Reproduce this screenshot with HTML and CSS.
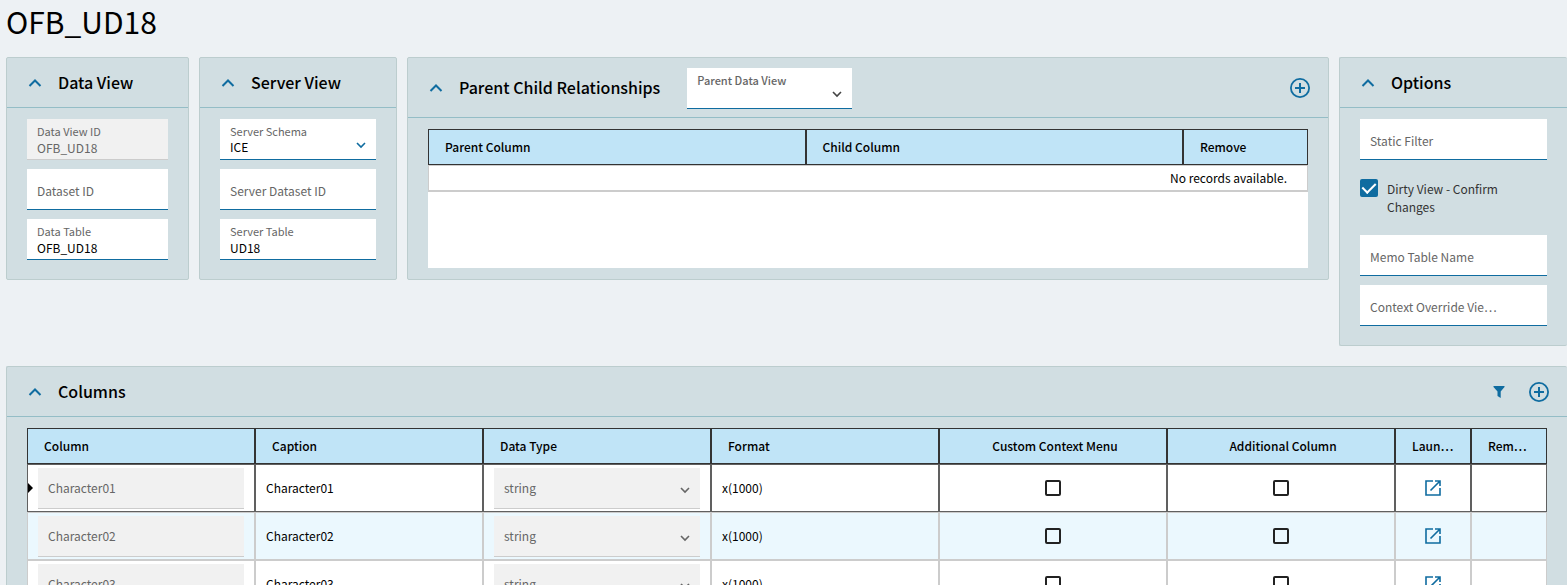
FILE: index.html
```html
<!DOCTYPE html>
<html lang="en">
<head>
    <meta charset="UTF-8">
    <meta name="viewport" content="width=device-width, initial-scale=1.0">
    <title>OFB_UD18</title>
    <link rel="stylesheet" href="styles.css">
</head>
<body>
    <!-- Shared icons -->
    <svg class="sprite" aria-hidden="true">
        <symbol id="chevron-up" viewBox="0 0 16 16"><path d="M2.500 11 8 5.500 13.500 11" fill="none" stroke="currentColor" stroke-width="2"/></symbol>
        <symbol id="chevron-down" viewBox="0 0 16 16"><path d="M4 6 8 10 12 6" fill="none" stroke="currentColor" stroke-width="1.6"/></symbol>
        <symbol id="plus" viewBox="0 0 20 20"><circle cx="10" cy="10" r="9.1" fill="none" stroke="currentColor" stroke-width="1.8"/><path d="M10 5v10M5 10h10" stroke="currentColor" stroke-width="2"/></symbol>
        <symbol id="filter" viewBox="0 0 12 12"><path d="M.5 0h11v1L7.7 5.5V12L4.5 10V5.500L.5 1z" fill="currentColor"/></symbol>
        <symbol id="launch" viewBox="0 0 16 16"><path d="M8 1H1v14h14V8M10 1h5v5M15 1 5.500 10.500" fill="none" stroke="currentColor" stroke-width="1.6"/></symbol>
    </svg>

    <main class="page">
        <h1>OFB_UD18</h1>

        <div class="panels">
            <section class="panel">
                <header class="panel-header">
                    <button class="icon-button toggle" aria-label="Collapse Data View"><svg><use href="#chevron-up"/></svg></button>
                    <h2>Data View</h2>
                </header>
                <div class="panel-body">
                    <div class="field disabled">
                        <label for="viewId">Data View ID</label>
                        <input type="text" id="viewId" value="OFB_UD18" disabled>
                    </div>
                    <div class="field empty">
                        <input type="text" placeholder="Dataset ID" aria-label="Dataset ID">
                    </div>
                    <div class="field">
                        <label for="dataTable">Data Table</label>
                        <input type="text" id="dataTable" value="OFB_UD18">
                    </div>
                </div>
            </section>

            <section class="panel">
                <header class="panel-header">
                    <button class="icon-button toggle" aria-label="Collapse Server View"><svg><use href="#chevron-up"/></svg></button>
                    <h2>Server View</h2>
                </header>
                <div class="panel-body">
                    <div class="field drop blue">
                        <label for="schema">Server Schema</label>
                        <select id="schema"><option>ICE</option></select>
                        <svg class="arrow"><use href="#chevron-down"/></svg>
                    </div>
                    <div class="field empty">
                        <input type="text" placeholder="Server Dataset ID" aria-label="Server Dataset ID">
                    </div>
                    <div class="field">
                        <label for="serverTable">Server Table</label>
                        <input type="text" id="serverTable" value="UD18">
                    </div>
                </div>
            </section>

            <section class="panel">
                <header class="panel-header tall">
                    <button class="icon-button toggle" aria-label="Collapse Parent Child Relationships"><svg><use href="#chevron-up"/></svg></button>
                    <h2>Parent Child Relationships</h2>
                    <div class="field drop parent-view">
                        <label for="parentView">Parent Data View</label>
                        <select id="parentView"><option></option></select>
                        <svg class="arrow"><use href="#chevron-down"/></svg>
                    </div>
                    <div class="actions">
                        <button class="icon-button add" aria-label="Add relationship"><svg><use href="#plus"/></svg></button>
                    </div>
                </header>
                <div class="panel-body">
                    <div class="relations">
                        <table class="grid">
                            <colgroup><col><col><col class="remove"></colgroup>
                            <thead>
                                <tr><th>Parent Column</th><th>Child Column</th><th>Remove</th></tr>
                            </thead>
                            <tbody>
                                <tr class="no-records"><td colspan="3">No records available.</td></tr>
                            </tbody>
                        </table>
                    </div>
                </div>
            </section>

            <section class="panel">
                <header class="panel-header">
                    <button class="icon-button toggle" aria-label="Collapse Options"><svg><use href="#chevron-up"/></svg></button>
                    <h2>Options</h2>
                </header>
                <div class="panel-body">
                    <div class="field empty">
                        <input type="text" placeholder="Static Filter" aria-label="Static Filter">
                    </div>
                    <div class="option">
                        <input type="checkbox" id="dirtyView" checked>
                        <label for="dirtyView">Dirty View - Confirm Changes</label>
                    </div>
                    <div class="field empty">
                        <input type="text" placeholder="Memo Table Name" aria-label="Memo Table Name">
                    </div>
                    <div class="field empty">
                        <input type="text" placeholder="Context Override Vie…" aria-label="Context Override View">
                    </div>
                </div>
            </section>
        </div>

        <section class="panel">
            <header class="panel-header">
                <button class="icon-button toggle" aria-label="Collapse Columns"><svg><use href="#chevron-up"/></svg></button>
                <h2>Columns</h2>
                <div class="actions">
                    <button class="icon-button filter" aria-label="Filter"><svg><use href="#filter"/></svg></button>
                    <button class="icon-button add" aria-label="Add column"><svg><use href="#plus"/></svg></button>
                </div>
            </header>
            <div class="panel-body">
                <table class="grid columns">
                    <colgroup><col span="6"><col class="narrow" span="2"></colgroup>
                    <thead>
                        <tr>
                            <th>Column</th>
                            <th>Caption</th>
                            <th>Data Type</th>
                            <th>Format</th>
                            <th class="center">Custom Context Menu</th>
                            <th class="center">Additional Column</th>
                            <th>Laun…</th>
                            <th>Rem…</th>
                        </tr>
                    </thead>
                    <tbody>
                        <tr class="current">
                            <td><div class="field disabled empty"><input type="text" value="Character01" aria-label="Column" disabled></div></td>
                            <td>Character01</td>
                            <td><div class="field disabled empty drop"><select aria-label="Data Type" disabled><option>string</option></select><svg class="arrow"><use href="#chevron-down"/></svg></div></td>
                            <td>x(1000)</td>
                            <td class="center"><input type="checkbox" aria-label="Custom Context Menu"></td>
                            <td class="center"><input type="checkbox" aria-label="Additional Column"></td>
                            <td class="center"><button class="icon-button launch" aria-label="Launch"><svg><use href="#launch"/></svg></button></td>
                            <td></td>
                        </tr>
                        <tr>
                            <td><div class="field disabled empty"><input type="text" value="Character02" aria-label="Column" disabled></div></td>
                            <td>Character02</td>
                            <td><div class="field disabled empty drop"><select aria-label="Data Type" disabled><option>string</option></select><svg class="arrow"><use href="#chevron-down"/></svg></div></td>
                            <td>x(1000)</td>
                            <td class="center"><input type="checkbox" aria-label="Custom Context Menu"></td>
                            <td class="center"><input type="checkbox" aria-label="Additional Column"></td>
                            <td class="center"><button class="icon-button launch" aria-label="Launch"><svg><use href="#launch"/></svg></button></td>
                            <td></td>
                        </tr>
                        <tr>
                            <td><div class="field disabled empty"><input type="text" value="Character03" aria-label="Column" disabled></div></td>
                            <td>Character03</td>
                            <td><div class="field disabled empty drop"><select aria-label="Data Type" disabled><option>string</option></select><svg class="arrow"><use href="#chevron-down"/></svg></div></td>
                            <td>x(1000)</td>
                            <td class="center"><input type="checkbox" aria-label="Custom Context Menu"></td>
                            <td class="center"><input type="checkbox" aria-label="Additional Column"></td>
                            <td class="center"><button class="icon-button launch" aria-label="Launch"><svg><use href="#launch"/></svg></button></td>
                            <td></td>
                        </tr>
                    </tbody>
                </table>
            </div>
        </section>
    </main>
</body>
</html>
```

FILE: styles.css
```css
* {
    box-sizing: border-box;
}
body {
    margin: 0;
    background-color: #edf1f4;
    color: #000000;
    font-family: "Noto Sans CJK SC", "Noto Sans", sans-serif;
    font-size: 12px;
    line-height: 18px;
}
input, select, button {
    font: inherit;
    color: inherit;
}
.sprite {
    display: none;
}
.page {
    height: 100vh;
    padding-left: 6px;
    overflow: hidden;
}
h1 {
    margin: 0;
    padding: 1px 0 16px;
    font-size: 30px;
    font-weight: 400;
    line-height: 40px;
}
h2 {
    margin: 0;
    padding-bottom: 2px;
    font-size: 16px;
    font-weight: 500;
    line-height: 24px;
}

/* Panels */
.panels {
    display: grid;
    grid-template-columns: 183fr 198fr 922fr 228fr;
    gap: 10px;
    align-items: start;
    margin-bottom: 20px;
}
.panel {
    min-width: 0;
    border: 1px solid #bccdce;
    border-radius: 2px;
    background-color: #d1dee2;
}
.page > .panel,
.panels > .panel:last-child {
    border-right: none;
}
.panel-header {
    display: flex;
    align-items: center;
    gap: 15px;
    min-height: 50px;
    padding: 0 18px 0 20px;
    border-bottom: 1px solid #94bdc6;
}
.panel-header.tall {
    padding-top: 9px;
    padding-bottom: 8px;
}
.panel-body {
    display: flex;
    flex-direction: column;
    gap: 9px;
    padding: 11px 20px 19px;
}
.actions {
    display: flex;
    align-items: center;
    gap: 24px;
    margin-left: auto;
}

/* Buttons */
.icon-button {
    display: block;
    flex: none;
    padding: 0;
    border: none;
    background: none;
    color: #0f6ca0;
    cursor: pointer;
}
.icon-button svg {
    display: block;
    width: 100%;
    height: 100%;
}
.toggle {
    width: 16px;
    height: 16px;
}
.add {
    width: 20px;
    height: 20px;
}
.filter {
    width: 12px;
    height: 12px;
}
.launch {
    width: 16px;
    height: 16px;
    margin: 0 auto;
}

/* Fields */
.field {
    position: relative;
    display: flex;
    flex-direction: column;
    height: 41px;
    padding: 4px 10px 0;
    border-bottom: 1px solid #0f6ca0;
    background-color: #ffffff;
}
.field label {
    color: #666666;
    font-size: 11px;
    line-height: 16px;
}
.field input,
.field select {
    width: 100%;
    height: 18px;
    padding: 0;
    border: none;
    outline: none;
    background: none;
    appearance: none;
    opacity: 1;
    line-height: 18px;
}
.field select {
    height: 16px;
    line-height: 16px;
}
.field input::placeholder {
    color: #666666;
    opacity: 1;
}
.field.empty {
    padding-top: 3px;
}
.field.empty input,
.field.empty select {
    height: 36px;
}
.field.disabled {
    border-color: #cccccc;
    background-color: #f1f1f1;
    color: #666666;
}
td .field.empty {
    padding-top: 2px;
}
.field .arrow {
    position: absolute;
    top: 18px;
    right: 7px;
    width: 16px;
    height: 16px;
    color: #444444;
    pointer-events: none;
}
.field.blue .arrow {
    color: #0f6ca0;
}
.field.disabled .arrow {
    top: 14px;
    color: #666666;
}
.parent-view {
    width: 165px;
    margin: 1px 0 0 12px;
}
.parent-view label {
    font-weight: 500;
}

/* Checkboxes */
input[type="checkbox"] {
    display: block;
    flex: none;
    width: 16px;
    height: 16px;
    margin: 0 auto;
    border: 2px solid #222222;
    border-radius: 2px;
    appearance: none;
}
.option {
    display: flex;
    gap: 9px;
    padding: 10px 0;
    color: #333333;
}
.option label {
    padding-top: 1px;
}
.option input[type="checkbox"] {
    display: grid;
    place-items: center;
    width: 18px;
    height: 18px;
    margin: 0;
    border: none;
    background-color: #0f6ca0;
}
.option input[type="checkbox"]::before {
    content: "";
    width: 6px;
    height: 11px;
    margin-bottom: 3px;
    border: solid #ffffff;
    border-width: 0 2px 2px 0;
    transform: rotate(45deg);
}

/* Grids */
.grid {
    width: 100%;
    table-layout: fixed;
    border-collapse: separate;
    border-spacing: 0;
    background-color: #ffffff;
}
.grid .remove {
    width: 125px;
}
.grid .narrow {
    width: 5%;
}
.grid th {
    height: 36px;
    padding: 0 12px 0 16px;
    border: 1px solid #333333;
    background-color: #c0e4f7;
    font-weight: 500;
    text-align: left;
    white-space: nowrap;
}
.grid td {
    position: relative;
    height: 48px;
    padding: 0 10px;
    border: 1px solid #cccccc;
}
.grid .center {
    text-align: center;
}
.grid tr:nth-child(even) td {
    background-color: #ebf8fe;
}
.grid .current td {
    border-color: #606060;
}
.current td:first-child::before {
    content: "";
    position: absolute;
    top: 18px;
    left: 0;
    border: 5px solid transparent;
    border-left-color: #000000;
    border-right: none;
}
.grid .no-records td {
    height: 27px;
    padding: 0 20px;
    border-bottom-width: 2px;
    text-align: right;
}
.relations {
    min-height: 139px;
    background-color: #ffffff;
}
.tall + .panel-body {
    padding-bottom: 11px;
}
```
